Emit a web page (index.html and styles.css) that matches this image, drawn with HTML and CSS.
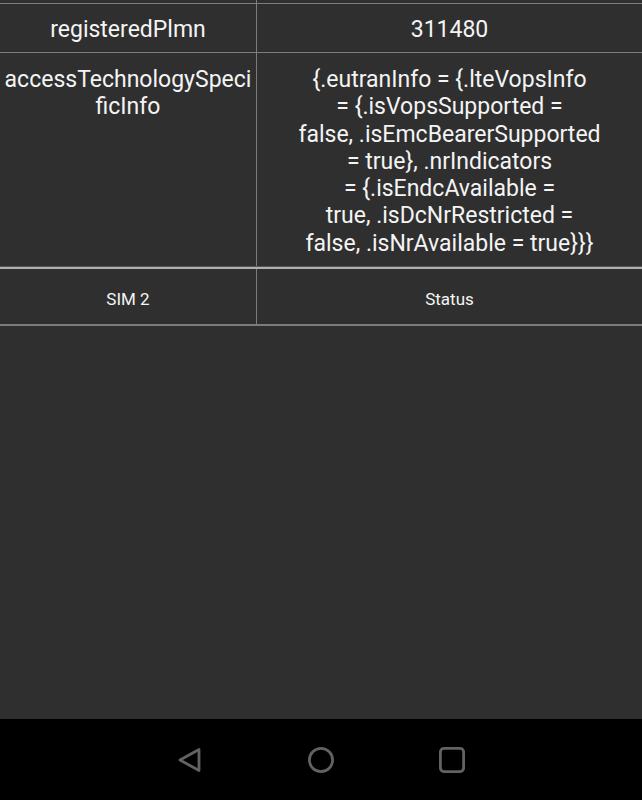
FILE: index.html
```html
<!DOCTYPE html>
<html>
<head>
    <meta charset="utf-8">
    <link rel="stylesheet" href="styles.css">
</head>
<body>
<div class="screen">
    <div class="info-table">
        <div class="row row-stub">
            <div class="cell cell-key"></div>
            <div class="cell cell-value"></div>
        </div>
        <div class="row row-plmn">
            <div class="cell cell-key">registeredPlmn</div>
            <div class="cell cell-value">311480</div>
        </div>
        <div class="row row-tech">
            <div class="cell cell-key">accessTechnologySpecificInfo</div>
            <div class="cell cell-value">
                {.eutranInfo = {.lteVopsInfo<br>
                = {.isVopsSupported =<br>
                false, .isEmcBearerSupported<br>
                = true}, .nrIndicators<br>
                = {.isEndcAvailable =<br>
                true, .isDcNrRestricted =<br>
                false, .isNrAvailable = true}}}
            </div>
        </div>
        <div class="section-divider"></div>
        <div class="row row-header">
            <div class="cell cell-key">SIM 2</div>
            <div class="cell cell-value">Status</div>
        </div>
    </div>

    <div class="filler"></div>

    <div class="nav-bar">
        <svg class="nav-icon" viewBox="0 0 28 28">
            <path d="M23 3.5 L23 24.5 L4 14 Z" fill="none" stroke="currentColor" stroke-width="2.8" stroke-linejoin="round"/>
        </svg>
        <svg class="nav-icon" viewBox="0 0 28 28">
            <circle cx="14" cy="14" r="11.6" fill="none" stroke="currentColor" stroke-width="2.8"/>
        </svg>
        <svg class="nav-icon" viewBox="0 0 28 28">
            <rect x="2.4" y="2.4" width="23.2" height="23.2" rx="3.5" fill="none" stroke="currentColor" stroke-width="2.8"/>
        </svg>
    </div>
</div>
</body>
</html>
```

FILE: styles.css
```css
* {
    margin: 0;
    padding: 0;
    box-sizing: border-box;
}

body {
    background: #2f2f2f;
    font-family: Roboto, 'Noto Sans', sans-serif;
    color: #f4f4f4;
}

.screen {
    height: 800px;
    display: flex;
    flex-direction: column;
}

.info-table {
    display: flex;
    flex-direction: column;
}

.row {
    display: flex;
    border-bottom: 1px solid #7c7c7c;
}

.cell {
    text-align: center;
}

.cell-key {
    width: 257px;
    flex-shrink: 0;
    border-right: 1px solid #7c7c7c;
    padding: 0 4px;
    word-break: break-all;
}

.cell-value {
    flex: 1;
}

.row-stub {
    height: 4px;
}

.row-plmn {
    height: 49px;
    align-items: center;
    font-size: 23px;
}

.row-plmn .cell {
    height: 100%;
    display: flex;
    align-items: center;
    justify-content: center;
    padding-top: 2px;
}

.row-tech {
    font-size: 23px;
    line-height: 27.3px;
}

.row-tech .cell {
    padding-top: 13px;
    padding-bottom: 9px;
}

.section-divider {
    height: 3px;
    background: #b0b0b0;
    margin-top: -1px;
    border-top: 1px solid #555;
}

.row-header {
    height: 57px;
    font-size: 17px;
    border-bottom-width: 2px;
}

.row-header .cell {
    height: 100%;
    display: flex;
    align-items: center;
    justify-content: center;
    padding-top: 4px;
}

.filler {
    flex: 1;
}

.nav-bar {
    height: 81px;
    background: #000;
    display: flex;
    align-items: center;
    justify-content: center;
    gap: 103px;
    padding-right: 1px;
    color: #626262;
}

.nav-icon {
    width: 28px;
    height: 28px;
}
```
